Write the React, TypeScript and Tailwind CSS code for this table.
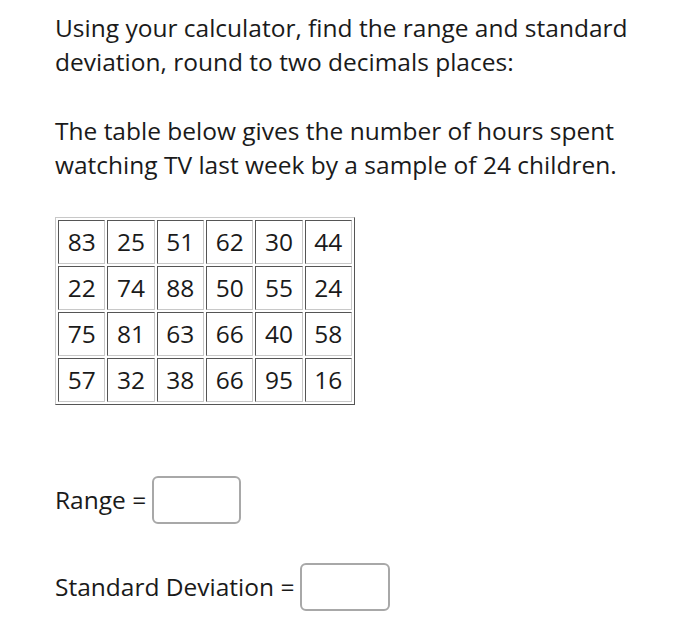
const rows = [
  ["83", "25", "51", "62", "30", "44"],
  ["22", "74", "88", "50", "55", "24"],
  ["75", "81", "63", "66", "40", "58"],
  ["57", "32", "38", "66", "95", "16"],
];

export default function App() {
  return (
    <div className="min-h-[627px] w-[700px] bg-white pl-[55px] pt-[11px] font-['Open_Sans',sans-serif] text-[24.5px] leading-[34px] text-[#1a1a1a]">
      <div className="w-[600px]">
        <p>Using your calculator, find the range and standard deviation, round to two decimals places:</p>
        <p className="mt-[35px]">
          The table below gives the number of hours spent watching TV last week by a sample of 24 children.
        </p>
      </div>

      <table className="mt-[35px] w-[300px] border-separate border-spacing-[2px] border border-t-[#c8c8c8] border-l-[#c8c8c8] border-r-[#555] border-b-[#555]">
        <tbody>
          {rows.map((row, i) => (
            <tr key={i}>
              {row.map((cell, j) => (
                <td
                  key={j}
                  className="h-[44px] border border-t-[#555] border-l-[#555] border-r-[#c8c8c8] border-b-[#c8c8c8] p-0 text-center"
                >
                  {cell}
                </td>
              ))}
            </tr>
          ))}
        </tbody>
      </table>

      <div className="mt-[71px] flex items-center">
        <span>Range =</span>
        <div className="ml-[6px] h-[48px] w-[89px] rounded-[6px] border-2 border-[#a8a8a8]" />
      </div>

      <div className="mt-[39px] flex items-center">
        <span>Standard Deviation =</span>
        <div className="ml-[6px] h-[48px] w-[90px] rounded-[6px] border-2 border-[#a8a8a8]" />
      </div>
    </div>
  );
}
